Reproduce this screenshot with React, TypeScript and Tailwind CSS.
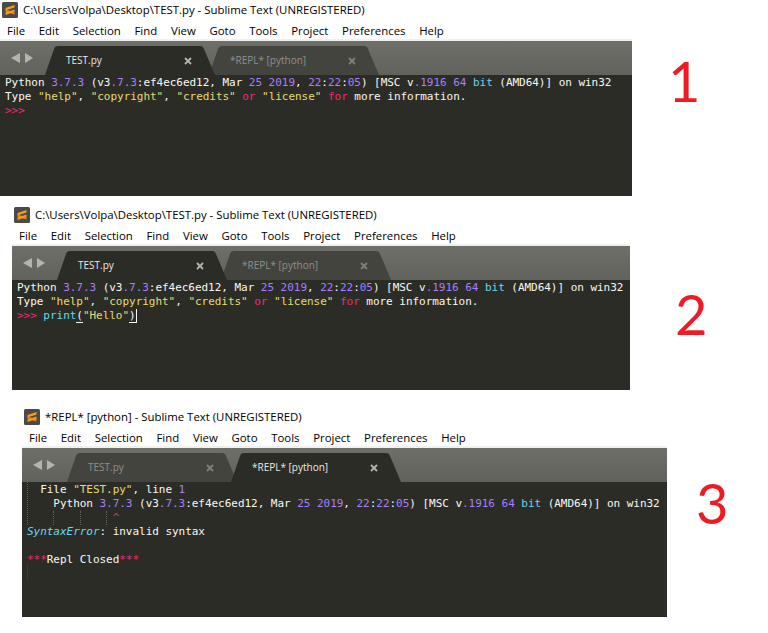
import React from 'react';

type Seg = [string, string?];

const W = 'text-[#f8f8f2]';
const P = 'text-[#a57fff]';
const Y = 'text-[#e6db74]';
const R = 'text-[#f92672]';
const C = 'text-[#66d9ef]';

const MENU = ['File', 'Edit', 'Selection', 'Find', 'View', 'Goto', 'Tools', 'Project', 'Preferences', 'Help'];

const BANNER: Seg[] = [
  ['Python '], ['3.7.3', P], [' (v3'], ['.7.3', P], [':ef4ec6ed12, Mar '], ['25 2019', P], [', '], ['22', P], [':'], ['22', P], [':'], ['05', P],
  [') [MSC v'], ['.1916 64', P], [' '], ['bit', C], [' (AMD64)] on win32'],
];

const HELP: Seg[] = [
  ['Type '], ['"help"', Y], [', '], ['"copyright"', Y], [', '], ['"credits"', Y], [' '], ['or', R], [' '], ['"license"', Y], [' '], ['for', R], [' more information.'],
];

function Logo() {
  return (
    <svg width="16" height="16" viewBox="0 0 16 16" className="shrink-0">
      <rect width="16" height="16" rx="1.5" fill="#4a4a48" />
      <path d="M3.5 6 12.5 3V5.6L3.5 8.6Z" fill="#f89820" />
      <path d="M3.5 7.4 12.5 10.2V12.6L3.5 9.8Z" fill="#e08a10" />
      <path d="M3.5 10.4 12.5 7.4V10L3.5 13Z" fill="#f89820" />
    </svg>
  );
}

function Line({ segs }: { segs: Seg[] }) {
  return (
    <div className="h-[14px] leading-[14px] whitespace-pre">
      {segs.map(([text, color], i) => (
        <span key={i} className={color ?? W}>{text}</span>
      ))}
    </div>
  );
}

function Tab({ label, active }: { label: string; active?: boolean }) {
  return (
    <div className={`relative w-[170px] h-[29px] -mr-[6px] flex items-center pl-[21px] pr-[23px] text-[10px] ${active ? 'z-10 text-[#e8e8e4]' : 'text-[#8f908a]'}`}>
      <svg width="170" height="29" viewBox="0 0 170 29" className="absolute left-0 top-0">
        <path d="M0 29 9 3Q10 0 13 0H155Q158 0 159 3L170 29Z" fill={active ? '#2c2c26' : '#44443f'} />
      </svg>
      <span className="relative flex-1">{label}</span>
      <svg width="8" height="8" viewBox="0 0 8 8" className="relative">
        <path d="M1 1 7 7M7 1 1 7" stroke={active ? '#b4b4b0' : '#80807a'} strokeWidth="1.8" />
      </svg>
    </div>
  );
}

function Window({ title, tabs, width, bodyHeight, children }: {
  title: string;
  tabs: { label: string; active?: boolean }[];
  width: string;
  bodyHeight: string;
  children: React.ReactNode;
}) {
  return (
    <div className={`${width} shrink-0`}>
      <div className="h-[20px] pl-[2px] flex items-center gap-[5px] text-[11.4px] text-black">
        <Logo />
        <span>{title}</span>
      </div>
      <div className="h-[19px] pl-[7px] pt-[2px] flex items-center gap-[13.7px] text-[11.4px] text-black">
        {MENU.map((m) => <span key={m}>{m}</span>)}
      </div>
      <div className="h-[2px] bg-[#f0f0f0]" />
      <div className="h-[34px] bg-gradient-to-b from-[#6f6f69] to-[#62625c] flex items-end pl-[11px]">
        <div className="w-[34px] shrink-0 mb-[12px] flex gap-[5px]">
          <svg width="9" height="10" viewBox="0 0 9 10"><path d="M9 0V10L0 5Z" fill="#b5b5b0" /></svg>
          <svg width="8" height="10" viewBox="0 0 8 10"><path d="M0 0V10L8 5Z" fill="#b5b5b0" /></svg>
        </div>
        {tabs.map((t) => <Tab key={t.label} {...t} />)}
      </div>
      <div className={`${bodyHeight} relative bg-[#2c2c26] pl-[5px] pt-px font-['DejaVu_Sans_Mono',monospace] text-[11px] tracking-[-0.033px]`}>
        {children}
      </div>
    </div>
  );
}

export default function App() {
  return (
    <div className="w-[768px] h-[633px] overflow-hidden bg-white font-['Open_Sans',sans-serif]">
      <div className="flex">
        <Window
          title="C:\Users\Volpa\Desktop\TEST.py - Sublime Text (UNREGISTERED)"
          tabs={[{ label: 'TEST.py', active: true }, { label: '*REPL* [python]' }]}
          width="w-[632px]"
          bodyHeight="h-[121px]"
        >
          <Line segs={BANNER} />
          <Line segs={HELP} />
          <Line segs={[['>>>', R]]} />
        </Window>
        <div className="ml-[36px] mt-[45px] font-['Lato',sans-serif] text-[56px] leading-[72px] text-[#ed1c24]">1</div>
      </div>

      <div className="flex mt-[9px] pl-[12px]">
        <Window
          title="C:\Users\Volpa\Desktop\TEST.py - Sublime Text (UNREGISTERED)"
          tabs={[{ label: 'TEST.py', active: true }, { label: '*REPL* [python]' }]}
          width="w-[618px]"
          bodyHeight="h-[110px]"
        >
          <Line segs={BANNER} />
          <Line segs={HELP} />
          <div className="h-[14px] leading-[14px] whitespace-pre flex">
            <span className={R}>{'>>>'}</span>
            <span className={C}> print</span>
            <span className={`${W} h-[14px] border-b border-[#f8f8f2]`}>(</span>
            <span className={Y}>"Hello"</span>
            <span className={`${W} h-[14px] border-b border-[#f8f8f2]`}>)</span>
            <span className="w-px h-[14px] bg-[#f8f8f2]" />
          </div>
        </Window>
        <div className="ml-[45px] mt-[73px] font-['Lato',sans-serif] text-[56px] leading-[72px] text-[#ed1c24]">2</div>
      </div>

      <div className="flex mt-[17px] pl-[22px]">
        <Window
          title="*REPL* [python] - Sublime Text (UNREGISTERED)"
          tabs={[{ label: 'TEST.py' }, { label: '*REPL* [python]', active: true }]}
          width="w-[645px]"
          bodyHeight="h-[135px]"
        >
          <Line segs={[['  File '], ['"TEST.py"', Y], [', line '], ['1', P]]} />
          <Line segs={[['    '], ...BANNER]} />
          <Line segs={[['             '], ['^', R]]} />
          <div className="h-[14px] leading-[14px] whitespace-pre">
            <span className={`${C} italic`}>SyntaxError</span>
            <span className={W}>: invalid syntax</span>
          </div>
          <div className="h-[14px]" />
          <Line segs={[['***', R], ['Repl Closed'], ['***', R]]} />
          {/* indent guides */}
          <div className="absolute left-[5px] top-0 h-[43px] border-l border-dotted border-[#62625c]" />
          <div className="absolute left-[31px] top-[29px] h-[14px] border-l border-dotted border-[#62625c]" />
          <div className="absolute left-[58px] top-[29px] h-[14px] border-l border-dotted border-[#62625c]" />
          <div className="absolute left-[84px] top-[29px] h-[14px] border-l border-dotted border-[#62625c]" />
          <div className="absolute left-[5px] top-[82px] h-[16px] border-l border-[#3a3a34]" />
        </Window>
        <div className="ml-[29px] mt-[60px] font-['Lato',sans-serif] text-[56px] leading-[72px] text-[#ed1c24]">3</div>
      </div>
    </div>
  );
}
